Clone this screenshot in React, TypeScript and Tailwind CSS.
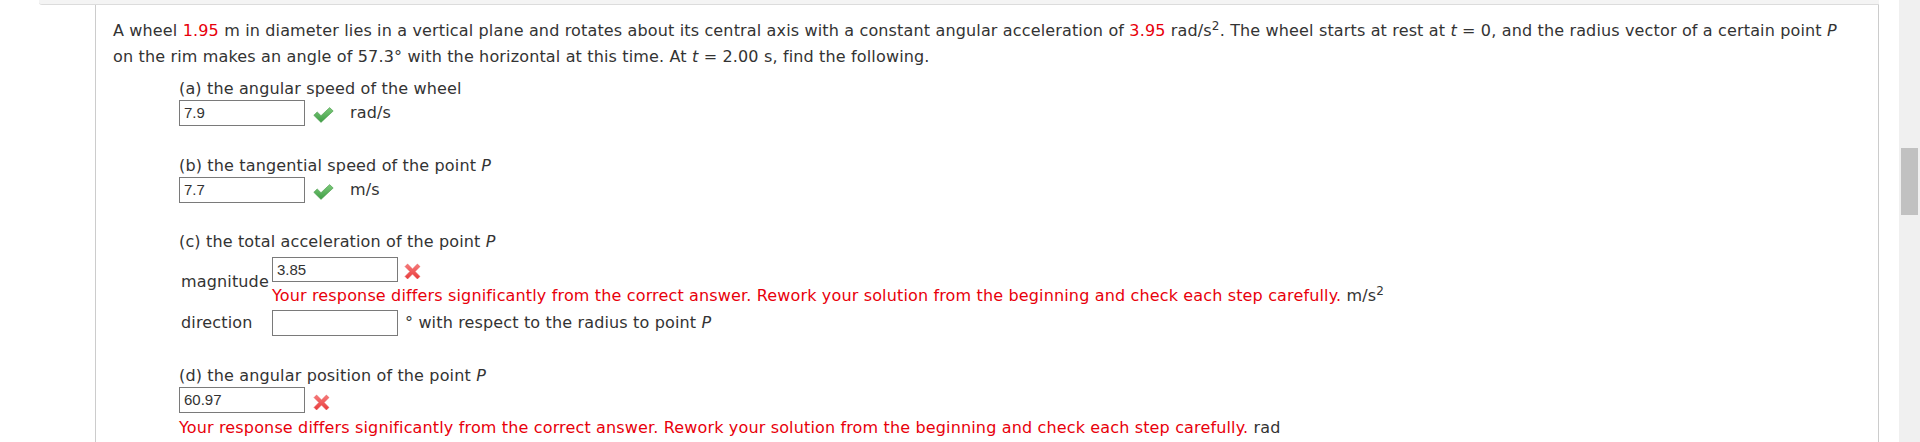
import React from "react";

const Check = () => (
  <svg width="21" height="16" viewBox="0 0 21 16" className="shrink-0">
    <defs>
      <linearGradient id="chk" x1="0" y1="0" x2="0" y2="1">
        <stop offset="0" stopColor="#7cc97a" />
        <stop offset="1" stopColor="#3f9e45" />
      </linearGradient>
    </defs>
    <path d="M0.8 8.3 L4.2 4.9 L8 8.7 L16.6 0.6 L20.2 4 L8 15.4 Z" fill="url(#chk)" stroke="#4a9a4c" strokeWidth="0.6" strokeLinejoin="round" />
  </svg>
);

const Cross = () => (
  <svg width="17" height="17" viewBox="0 0 17 17" className="shrink-0">
    <defs>
      <linearGradient id="crs" x1="0" y1="0" x2="0" y2="1">
        <stop offset="0" stopColor="#f77b7b" />
        <stop offset="1" stopColor="#e83b3b" />
      </linearGradient>
    </defs>
    <path
      d="M1 3.6 L3.6 1 L8.5 5.9 L13.4 1 L16 3.6 L11.1 8.5 L16 13.4 L13.4 16 L8.5 11.1 L3.6 16 L1 13.4 L5.9 8.5 Z"
      fill="url(#crs)"
      stroke="#e24a4a"
      strokeWidth="0.5"
      strokeLinejoin="round"
    />
  </svg>
);

const Field = ({ value, h = "h-[26px]" }: { value: string; h?: string }) => (
  <div
    className={`w-[126px] ${h} shrink-0 border border-[#7a7a7a] bg-white px-[4px] flex items-center font-['Liberation_Sans',Arial,sans-serif] text-[15px] tracking-normal text-[#333]`}
  >
    {value}
  </div>
);

const Red = ({ children }: { children: React.ReactNode }) => (
  <span className="text-[#e8000b]">{children}</span>
);

const ErrorMsg = () => (
  <Red>
    Your response differs significantly from the correct answer. Rework your solution from the beginning and check each step carefully.
  </Red>
);

export default function App() {
  return (
    <div className="h-[442px] w-[1920px] overflow-hidden bg-white flex font-['DejaVu_Sans',Verdana,sans-serif] text-[16px] tracking-[0.15px] text-[#333]">
      <div className="flex-1 flex flex-col">
        {/* header strip of the card above */}
        <div className="ml-[39px] w-[1840px] h-[5px] bg-[#f4f4f4] border-b border-[#dcdcdc] rounded-bl-[3px]" />

        <div className="ml-[95px] w-[1784px] flex-1 border-l border-r border-[#cccccc] pl-[17px] pr-[30px] pt-[13px]">
          <p className="leading-[26px]">
            A wheel <Red>1.95</Red> m in diameter lies in a vertical plane and rotates about its central axis with a constant
            angular acceleration of <Red>3.95</Red> rad/s<sup>2</sup>. The wheel starts at rest at <i>t</i> = 0, and the
            radius vector of a certain point <i>P</i> on the rim makes an angle of 57.3° with the horizontal at this time.
            At <i>t</i> = 2.00 s, find the following.
          </p>

          <div className="ml-[66px] leading-[22px]">
            {/* (a) */}
            <div className="mt-[8px]">(a) the angular speed of the wheel</div>
            <div className="flex items-center">
              <Field value="7.9" />
              <div className="ml-[8px] mt-[4px]">
                <Check />
              </div>
              <span className="ml-[16px]">rad/s</span>
            </div>

            {/* (b) */}
            <div className="mt-[29px]">
              (b) the tangential speed of the point <i>P</i>
            </div>
            <div className="flex items-center">
              <Field value="7.7" />
              <div className="ml-[8px] mt-[4px]">
                <Check />
              </div>
              <span className="ml-[16px]">m/s</span>
            </div>

            {/* (c) */}
            <div className="mt-[28px]">
              (c) the total acceleration of the point <i>P</i>
            </div>
            <div className="grid grid-cols-[91px_1fr] pl-[2px] mt-[4px] gap-y-[3px]">
              <div className="self-center">magnitude</div>
              <div>
                <div className="flex items-center">
                  <Field value="3.85" h="h-[25px]" />
                  <div className="ml-[6px] mt-[4px]">
                    <Cross />
                  </div>
                </div>
                <div className="mt-[3px]">
                  <ErrorMsg /> m/s<sup>2</sup>
                </div>
              </div>
              <div className="self-center">direction</div>
              <div className="flex items-center">
                <Field value="" />
                <span className="ml-[7px]">° with respect to the radius to point <i>P</i></span>
              </div>
            </div>

            {/* (d) */}
            <div className="mt-[29px]">
              (d) the angular position of the point <i>P</i>
            </div>
            <div className="flex items-center">
              <Field value="60.97" />
              <div className="ml-[8px] mt-[4px]">
                <Cross />
              </div>
            </div>
            <div className="mt-[4px]">
              <ErrorMsg /> rad
            </div>
          </div>
        </div>
      </div>

      {/* vertical scrollbar */}
      <div className="w-[21px] h-full bg-[#f0f0f0] relative">
        <div className="absolute left-[2px] top-[148px] w-[17px] h-[67px] bg-[#c1c1c1]" />
      </div>
    </div>
  );
}
